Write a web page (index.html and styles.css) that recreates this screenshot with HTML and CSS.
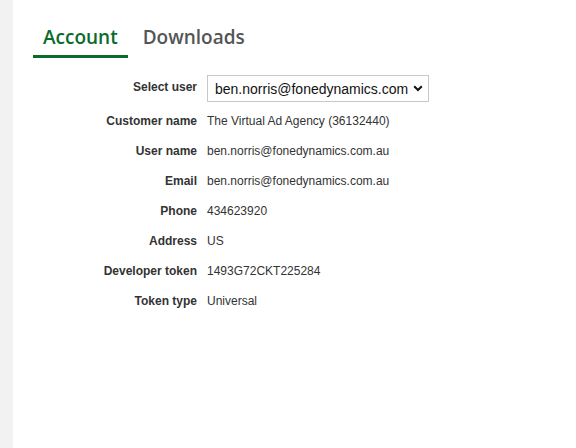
FILE: index.html
```html
<!DOCTYPE html>
<html>
<head>
<meta charset="utf-8">
<link rel="stylesheet" href="styles.css">
</head>
<body>
<div class="page">
  <aside class="rail"></aside>
  <main class="content">
    <nav class="tabs">
      <a class="tab active">Account</a>
      <a class="tab">Downloads</a>
    </nav>
    <div class="form">
      <div class="row row-select">
        <div class="label">Select user</div>
        <div class="value">
          <div class="select">
            <span>ben.norris@fonedynamics.com</span>
            <svg class="chev" width="10" height="7" viewBox="0 0 10 7"><path d="M1.2 1.2 L5 5 L8.8 1.2" fill="none" stroke="#111" stroke-width="2"/></svg>
          </div>
        </div>
      </div>
      <div class="row"><div class="label">Customer name</div><div class="value">The Virtual Ad Agency (36132440)</div></div>
      <div class="row"><div class="label">User name</div><div class="value">ben.norris@fonedynamics.com.au</div></div>
      <div class="row"><div class="label">Email</div><div class="value">ben.norris@fonedynamics.com.au</div></div>
      <div class="row"><div class="label">Phone</div><div class="value">434623920</div></div>
      <div class="row"><div class="label">Address</div><div class="value">US</div></div>
      <div class="row"><div class="label">Developer token</div><div class="value">1493G72CKT225284</div></div>
      <div class="row"><div class="label">Token type</div><div class="value">Universal</div></div>
    </div>
  </main>
</div>
</body>
</html>
```
FILE: styles.css
```css
html, body {
  margin: 0;
  padding: 0;
  background: #fff;
}
.page {
  display: flex;
  width: 576px;
  height: 448px;
  overflow: hidden;
}
.rail {
  width: 13px;
  flex: none;
  background: #f2f2f2;
}
.content {
  flex: 1;
  padding-left: 20px;
  font-family: "Liberation Sans", Arial, sans-serif;
  color: #333;
}
.tabs {
  display: flex;
  gap: 5px;
  padding-top: 23px;
}
.tab {
  font-family: "Open Sans", "Noto Sans", sans-serif;
  font-size: 19px;
  font-weight: 600;
  color: #555;
  padding: 0 10px 4px;
  line-height: 28px;
  border-bottom: 3px solid transparent;
}
.tab.active {
  color: #0b6b2b;
  border-bottom-color: #0b6b2b;
}
.form {
  padding-top: 17px;
}
.row {
  display: flex;
  align-items: center;
  height: 30px;
  font-size: 12px;
}
.row-select {
  height: 27px;
  margin-bottom: 4px;
}
.label {
  width: 164px;
  text-align: right;
  font-weight: bold;
  color: #333;
  padding-right: 10px;
}
.row-select .label {
  align-self: flex-start;
  padding-top: 5px;
}
.value {
  color: #333;
}
.select {
  box-sizing: border-box;
  width: 222px;
  height: 27px;
  border: 1px solid #c8c8c8;
  display: flex;
  align-items: center;
  padding-left: 7px;
  padding-right: 5px;
  font-size: 14px;
  color: #111;
  justify-content: space-between;
}
.chev {
  display: block;
}
```
